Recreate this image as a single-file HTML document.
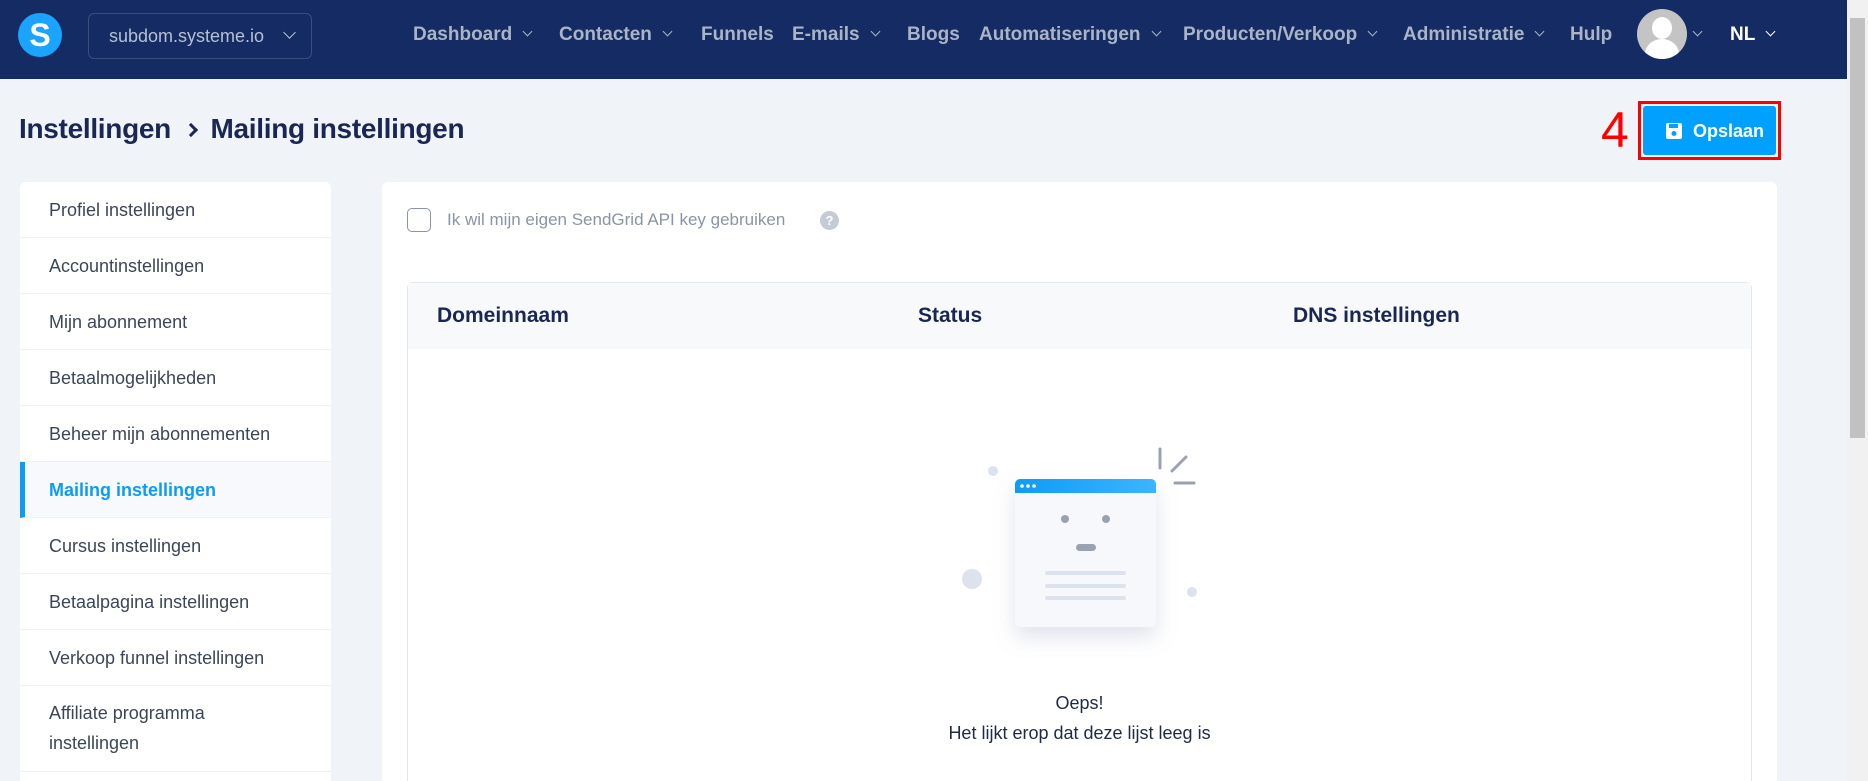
<!DOCTYPE html>
<html><head><meta charset="utf-8"><style>
*{box-sizing:border-box;margin:0;padding:0}
html,body{width:1868px;height:781px;overflow:hidden}
body{background:#f0f3f8;font-family:"Liberation Sans",sans-serif;position:relative}
.hdr{position:absolute;left:0;top:0;width:1848px;height:79px;background:#142c63}
.logo{position:absolute;left:18px;top:13px;width:44px;height:44px;border-radius:50%;background:#1aa3ff;color:#fff;font-weight:bold;font-size:32px;text-align:center;line-height:44px}
.dom{position:absolute;left:88px;top:13px;width:224px;height:46px;border:1px solid #3a4e7e;border-radius:6px;color:#b6c0d2;font-size:18px;line-height:44px;padding-left:20px}
.nav{position:absolute;top:0;height:70px;line-height:70px;color:#aab4c6;font-weight:bold;font-size:19px;white-space:nowrap}
.car{display:inline-block;width:7px;height:7px;border-right:1.5px solid #aab4c6;border-bottom:1.5px solid #aab4c6;transform:rotate(45deg);margin-left:12px;position:relative;top:-5px}
.av{position:absolute;left:1637px;top:9px;width:50px;height:50px;border-radius:50%;background:#c4c4c4;overflow:hidden}
.sb{position:absolute;left:1847px;top:0;width:21px;height:781px;background:#f1f1f1}
.sb div{position:absolute;left:3px;top:18px;width:15px;height:420px;background:#c1c1c1}
.title{position:absolute;left:19px;top:113px;font-size:28px;color:#1a2754;font-weight:bold;letter-spacing:-0.3px}
.btnb{position:absolute;left:1638px;top:101px;width:143px;height:59px;border:3px solid #ff0000}
.btn{position:absolute;left:2px;top:2px;right:2px;bottom:2px;background:#00a0ff;border-radius:3px;color:#fff;font-weight:bold;font-size:18px;line-height:50px;padding-left:50px}
.side{position:absolute;left:20px;top:182px;width:311px;height:599px;background:#fff;border-radius:6px 6px 0 0;overflow:hidden}
.it{height:56px;border-bottom:1px solid #edf0f4;padding-left:29px;line-height:56px;font-size:18px;color:#3b4658}
.card{position:absolute;left:382px;top:182px;width:1395px;height:599px;background:#fff;border-radius:6px 6px 0 0;overflow:hidden}
.tbl{position:absolute;left:25px;top:100px;width:1345px;height:560px;border:1px solid #e3e7ee;border-radius:6px}
.th{height:66px;background:#f8f9fb;font-weight:bold;font-size:21px;color:#1a2754;position:relative}
.th span{position:absolute;top:21px}
</style></head><body>
<div class="hdr">
<div class="logo">S</div>
<div class="dom">subdom.systeme.io <span class="car" style="margin-left:16px;border-color:#b6c0d2;width:9px;height:9px"></span></div>
<div class="nav" style="left:413px">Dashboard<span class="car"></span></div>
<div class="nav" style="left:559px">Contacten<span class="car"></span></div>
<div class="nav" style="left:701px">Funnels</div>
<div class="nav" style="left:792px">E-mails<span class="car"></span></div>
<div class="nav" style="left:907px">Blogs</div>
<div class="nav" style="left:979px">Automatiseringen<span class="car"></span></div>
<div class="nav" style="left:1183px">Producten/Verkoop<span class="car"></span></div>
<div class="nav" style="left:1403px">Administratie<span class="car"></span></div>
<div class="nav" style="left:1570px">Hulp</div>
<div class="av"><div style="position:absolute;left:15px;top:8px;width:20px;height:22px;border-radius:50%;background:#fff"></div><div style="position:absolute;left:8px;top:30px;width:34px;height:30px;border-radius:50%;background:#fff"></div></div>
<div class="nav" style="left:1694px"><span class="car" style="margin-left:0"></span></div>
<div class="nav" style="left:1730px;color:#fff">NL<span class="car" style="border-color:#fff"></span></div>
</div>
<div class="sb"><div></div></div>
<div class="title">Instellingen <span style="display:inline-block;width:10px;height:10px;border-right:3px solid #1a2754;border-top:3px solid #1a2754;transform:rotate(45deg);margin:0 14px 0 8px;position:relative;top:-3px"></span>Mailing instellingen</div>
<div style="position:absolute;left:1601px;top:100px;color:#ff0000;font-size:50px;line-height:60px">4</div>
<div class="btnb"><div class="btn"><svg style="position:absolute;left:22px;top:16px" width="18" height="18" viewBox="0 0 18 18"><rect x="1" y="1" width="16" height="16" rx="2" fill="#fff"/><rect x="4" y="2" width="9" height="4" fill="#00a0ff"/><circle cx="9" cy="11.5" r="2.5" fill="#00a0ff"/></svg>Opslaan</div></div>
<div class="side">
<div class="it">Profiel instellingen</div>
<div class="it">Accountinstellingen</div>
<div class="it">Mijn abonnement</div>
<div class="it">Betaalmogelijkheden</div>
<div class="it">Beheer mijn abonnementen</div>
<div class="it" style="color:#0d9cf5;font-weight:bold;background:#f7f9fc;border-left:5px solid #0d9cf5;padding-left:24px">Mailing instellingen</div>
<div class="it">Cursus instellingen</div>
<div class="it">Betaalpagina instellingen</div>
<div class="it">Verkoop funnel instellingen</div>
<div class="it" style="height:86px;line-height:30px;padding-top:12px">Affiliate programma<br>instellingen</div>
</div>
<div class="card">
<div style="position:absolute;left:25px;top:26px;width:24px;height:24px;border:1.5px solid #8a94a6;border-radius:5px"></div>
<div style="position:absolute;left:65px;top:28px;font-size:17px;color:#8a94a6">Ik wil mijn eigen SendGrid API key gebruiken</div>
<div style="position:absolute;left:438px;top:29px;width:19px;height:19px;border-radius:50%;background:#c5cbd6;color:#fff;font-size:13px;font-weight:bold;text-align:center;line-height:19px">?</div>
<div class="tbl">
<div class="th"><span style="left:29px">Domeinnaam</span><span style="left:510px">Status</span><span style="left:885px">DNS instellingen</span></div>
</div>
<svg style="position:absolute;left:0;top:0" width="1395" height="599">
<defs><linearGradient id="g" x1="0" x2="1"><stop offset="0" stop-color="#0d9cf5"/><stop offset="1" stop-color="#3db4ff"/></linearGradient>
<filter id="s" x="-50%" y="-50%" width="200%" height="200%"><feDropShadow dx="0" dy="10" stdDeviation="10" flood-color="#8090b0" flood-opacity="0.25"/></filter></defs>
<circle cx="611" cy="289" r="5" fill="#dde3ec"/><circle cx="590" cy="397" r="10" fill="#dde3ec"/><circle cx="810" cy="410" r="5" fill="#dde3ec"/>
<g stroke="#9aa1b1" stroke-width="3" stroke-linecap="round"><line x1="778" y1="267" x2="778" y2="286"/><line x1="790" y1="289" x2="804" y2="275"/><line x1="793" y1="301" x2="812" y2="301"/></g>
<rect x="633" y="297" width="141" height="148" rx="5" fill="#f6f8fb" filter="url(#s)"/>
<path d="M638 297h131a5 5 0 0 1 5 5v9h-141v-9a5 5 0 0 1 5-5z" fill="url(#g)"/>
<circle cx="640" cy="304" r="1.8" fill="#fff"/><circle cx="646" cy="304" r="1.8" fill="#fff"/><circle cx="652" cy="304" r="1.8" fill="#fff"/>
<circle cx="683" cy="337" r="4" fill="#9aa1b1"/><circle cx="724" cy="337" r="4" fill="#9aa1b1"/>
<rect x="694" y="362" width="20" height="7" rx="3.5" fill="#9aa1b1"/>
<rect x="663" y="389" width="81" height="4" rx="2" fill="#dde3ec"/><rect x="663" y="402" width="81" height="4" rx="2" fill="#dde3ec"/><rect x="663" y="414" width="81" height="4" rx="2" fill="#dde3ec"/>
</svg>
<div style="position:absolute;left:0;width:1395px;top:506px;text-align:center;font-size:18px;color:#1f2a44;line-height:30px">Oeps!<br>Het lijkt erop dat deze lijst leeg is</div>
</div>
</body></html>
